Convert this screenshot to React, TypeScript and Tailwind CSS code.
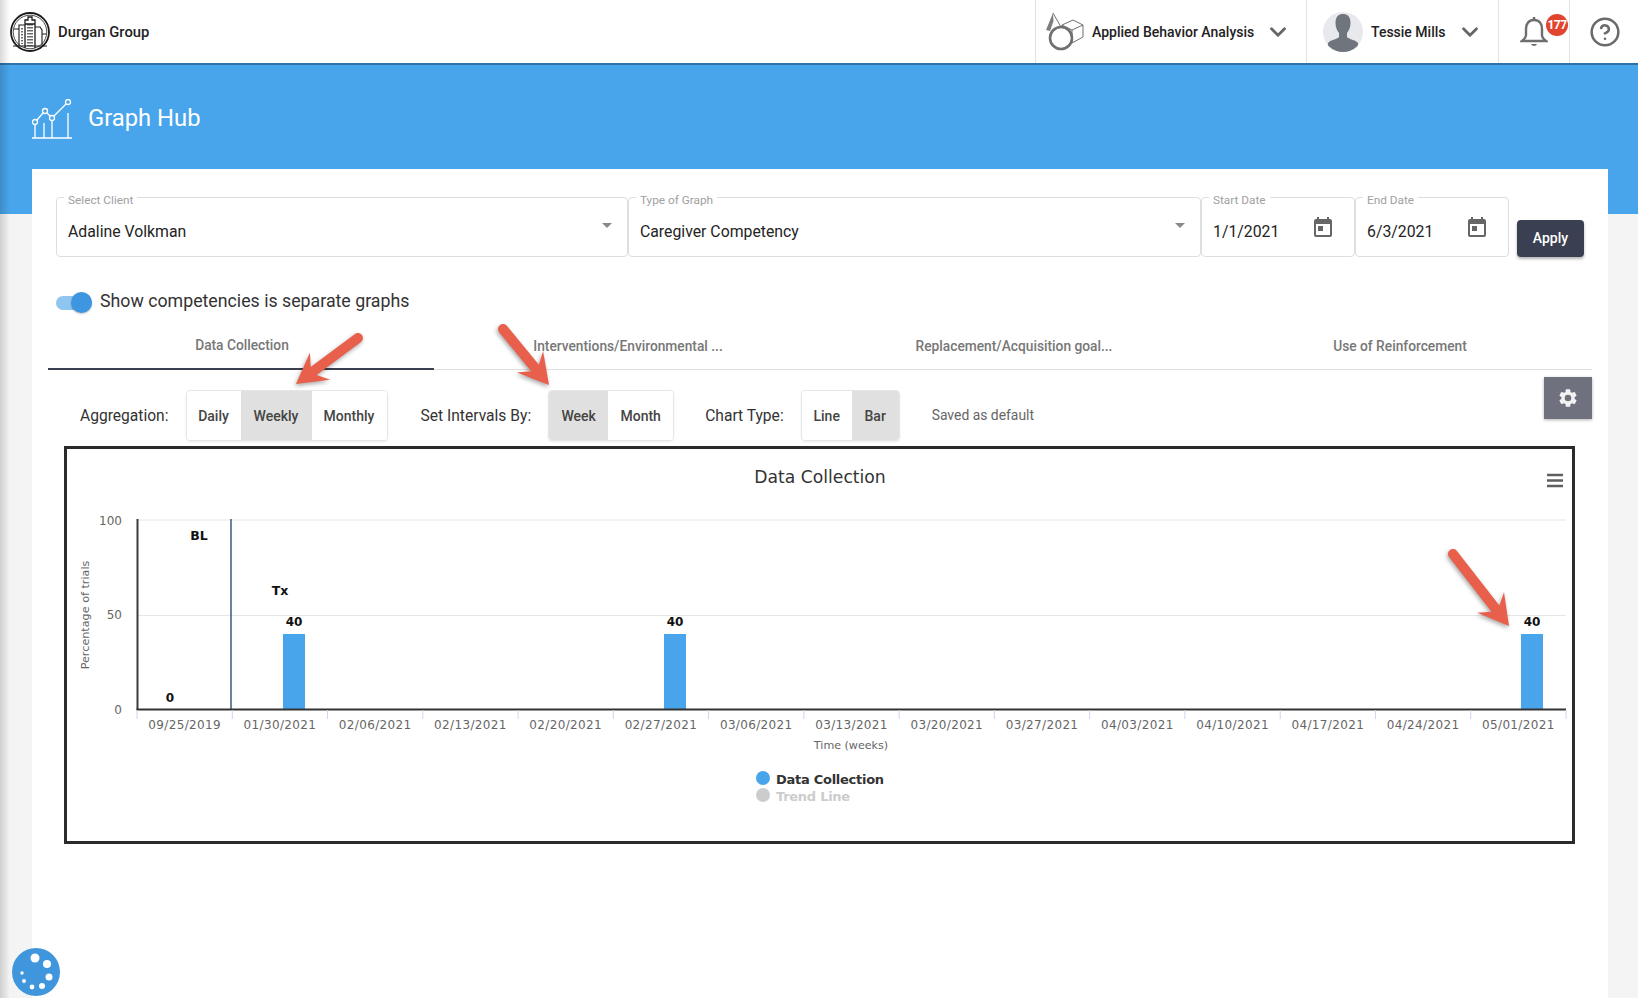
import React from "react";
import { ChevronDown, CircleHelp } from "lucide-react";

const dates = ["09/25/2019","01/30/2021","02/06/2021","02/13/2021","02/20/2021","02/27/2021","03/06/2021","03/13/2021","03/20/2021","03/27/2021","04/03/2021","04/10/2021","04/17/2021","04/24/2021","05/01/2021"];

function Logo() {
  return (
    <svg width="40" height="40" viewBox="0 0 40 40" fill="none" stroke="#1c1c1c" className="shrink-0">
      <circle cx="20" cy="20" r="19" strokeWidth="1.800" />
      <circle cx="20" cy="20" r="16.800" strokeWidth="0.8" />
      <path d="M15 36V8h3V5h4v3h3v28M15 12h10" strokeWidth="1.300" />
      <path d="M15 13H9v21M25 15h5l2 3v15M9 17H4M32 22h4" strokeWidth="1.100" />
      <path d="M18 12v22M20 12v22M22 12v22M12 16v16" strokeWidth="1.300" strokeDasharray="1.500 1.500" />
      <path d="M3 34h34" strokeWidth="1.200" />
    </svg>
  );
}

function ShapesIcon() {
  return (
    <svg width="40" height="40" viewBox="0 0 40 40" fill="none" stroke="#6f6f6f" className="shrink-0">
      <path d="M18 13l11-5 10 5v12l-11 6-10-6zM18 13l10 5 11-5M28 18v13" strokeWidth="1" fill="#fff" />
      <path d="M9 1 2 18l4 1 3.500-10z" fill="#7d7d7d" stroke="none" />
      <path d="M9 1l8 14" strokeWidth="1" />
      <circle cx="17" cy="26" r="11" strokeWidth="2.600" fill="#fff" />
    </svg>
  );
}

function Avatar() {
  return (
    <svg width="40" height="40" viewBox="0 0 40 40" className="shrink-0">
      <clipPath id="av"><circle cx="20" cy="20" r="20" /></clipPath>
      <circle cx="20" cy="20" r="20" fill="#e8e9ec" />
      <g clipPath="url(#av)" fill="#70757d">
        <path d="M12.500 11C12.500 4 16 2 20 2s7.500 2 7.500 9c0 5-2 8-3.500 10v4c1 2 9 3 11 6l1 9H4l1-9c2-3 10-4 11-6v-4c-1.500-2-3.500-5-3.500-10z" />
      </g>
    </svg>
  );
}

function CalendarIcon() {
  return (
    <svg width="24" height="24" viewBox="0 0 24 24" fill="#666" className="shrink-0">
      <path d="M19 3h-1V1h-2v2H8V1H6v2H5c-1.110 0-1.990.9-1.990 2L3 19c0 1.100.89 2 2 2h14c1.100 0 2-.9 2-2V5c0-1.100-.9-2-2-2zm0 16H5V8h14v11zM7 10h5v5H7z" />
    </svg>
  );
}

function Outlined({ label, value, className, kind }: { label: string; value: string; className: string; kind: "select" | "date" }) {
  return (
    <div className={`relative h-[60px] rounded-[4px] border border-[#dedede] flex items-center pl-[11px] ${className}`}>
      <span className="absolute left-[7px] top-[-5px] bg-white px-[4px] text-[11.8px] leading-[14px] text-[#a0a0a0]">{label}</span>
      <span className="text-[15.8px] leading-[20px] text-[#232323] mt-[10px]">{value}</span>
      {kind === "select" ? (
        <span className="ml-auto mr-[15px] mt-[-3px] w-0 h-0 border-l-[5px] border-r-[5px] border-t-[5px] border-l-transparent border-r-transparent border-t-[#8a8a8a]" />
      ) : (
        <span className="ml-auto mr-[19px] mt-[2px]"><CalendarIcon /></span>
      )}
    </div>
  );
}

function Group({ items, active, widths }: { items: string[]; active: string; widths: string[] }) {
  return (
    <div className="flex h-[51px] rounded-[4px] border border-[#e6e6e6] shadow-[0_1px_2px_rgba(0,0,0,0.08)] overflow-hidden">
      {items.map((t, i) => (
        <div key={t} className={`flex items-center justify-center pt-[2px] text-[14px] font-medium text-[#444] ${widths[i]} ${t === active ? "bg-[#e0e0e0]" : "bg-white"}`}>{t}</div>
      ))}
    </div>
  );
}

function Arrow({ x1, y1, x2, y2 }: { x1: number; y1: number; x2: number; y2: number }) {
  const len = Math.hypot(x2 - x1, y2 - y1);
  const ang = (Math.atan2(y2 - y1, x2 - x1) * 180) / Math.PI;
  return (
    <g transform={`translate(${x1} ${y1}) rotate(${ang})`} fill="#e8604c">
      <path d={`M0 -5 L${len - 22} -5 L${len - 30} -17 L${len} 0 L${len - 30} 17 L${len - 22} 5 L0 5 A5 5 0 0 1 0 -5Z`} />
    </g>
  );
}

function Chart() {
  const step = (1566 - 137) / 15;
  return (
    <svg width="1505" height="392" viewBox="67 450 1505 392" className="block">
      <g fontFamily="'DejaVu Sans', sans-serif">
        <text x="820" y="484" textAnchor="middle" fontSize="17.2" fill="#333">Data Collection</text>
        <path d="M1547 476h16M1547 481.500h16M1547 487h16" stroke="#5f5f5f" strokeWidth="2.600" />
        <path d="M137 521H1566M137 616.500H1566" stroke="#e6e6e6" />
        {["100", "50", "0"].map((t, i) => (
          <text key={t} x="122" y={[526, 620, 715][i]} textAnchor="end" fontSize="12" fill="#666">{t}</text>
        ))}
        <text transform="translate(89 616) rotate(-90)" textAnchor="middle" fontSize="11.2" fill="#666">Percentage of trials</text>
        {[283, 664, 1521].map((x) => <rect key={x} x={x} y="635" width="22" height="75" fill="#48a5ec" />)}
        <path d="M231 520V710" stroke="#2c4f70" strokeWidth="1.400" />
        <path d="M137.500 520V711" stroke="#3a3a3a" strokeWidth="2" />
        <path d="M136.500 710.500H1566" stroke="#333" strokeWidth="2" />
        {Array.from({ length: 16 }, (_, i) => (
          <path key={i} d={`M${137 + i * step} 711V720`} stroke="#ccd6eb" />
        ))}
        {dates.map((d, i) => (
          <text key={d} x={137 + step * (i + 0.5)} y="730" textAnchor="middle" fontSize="12" letterSpacing="0.35" fill="#666">{d}</text>
        ))}
        <text x="851" y="750" textAnchor="middle" fontSize="11.1" fill="#666">Time (weeks)</text>
        <g fontWeight="700" fill="#111">
          <text x="199" y="541" textAnchor="middle" fontSize="12.500">BL</text>
          <text x="280" y="596" textAnchor="middle" fontSize="12.500">Tx</text>
          <text x="170" y="703" textAnchor="middle" fontSize="12">0</text>
          {[294, 675, 1532].map((x) => <text key={x} x={x} y="627" textAnchor="middle" fontSize="12">40</text>)}
        </g>
        <circle cx="763" cy="779" r="7" fill="#48a5ec" />
        <circle cx="763" cy="796" r="7" fill="#cccccc" />
        <text x="776" y="784.500" fontSize="13" letterSpacing="-0.27" fontWeight="700" fill="#333">Data Collection</text>
        <text x="776" y="801.500" fontSize="13" letterSpacing="-0.27" fontWeight="700" fill="#cccccc">Trend Line</text>
      </g>
    </svg>
  );
}

export default function App() {
  return (
    <div className="relative h-screen overflow-hidden bg-[#f4f4f4] font-['Roboto',sans-serif]">
      <header className="flex h-[65px] items-center bg-white border-b-2 border-[#2f72a8]">
        <div className="flex items-center pl-[10px] gap-[8px]">
          <Logo />
          <span className="text-[14.8px] font-medium text-[#222] mt-[2px]">Durgan Group</span>
        </div>
        <div className="ml-auto flex h-full">
          <div className="flex items-center w-[271px] border-l border-[#e2e2e2] pl-[8px]">
            <ShapesIcon />
            <span className="ml-[8px] text-[14px] font-medium text-[#222] mt-[2px]">Applied Behavior Analysis</span>
            <ChevronDown className="ml-[11px] text-[#666]" size={26} strokeWidth={2.6} />
          </div>
          <div className="flex items-center w-[192px] border-l border-[#e2e2e2] pl-[16px]">
            <Avatar />
            <span className="ml-[8px] text-[14px] font-medium text-[#222] mt-[2px]">Tessie Mills</span>
            <ChevronDown className="ml-[11px] text-[#666]" size={26} strokeWidth={2.6} />
          </div>
          <div className="relative flex items-center w-[71px] border-l border-[#e2e2e2] pl-[21px]">
            <svg width="28" height="32" viewBox="0 0 28 32" fill="none" stroke="#6e6e6e" strokeWidth="2.400">
              <path d="M14 4c-5.500 0-8 4-8 9v6c0 2-1.500 4-4 6h24c-2.500-2-4-4-4-6v-6c0-5-2.500-9-8-9z" />
              <path d="M14 1v3" strokeWidth="2.600" />
              <path d="M11 28c1 2.500 5 2.500 6 0z" fill="#6e6e6e" stroke="none" />
            </svg>
            <span className="absolute left-[47px] top-[14px] flex h-[22px] w-[22px] items-center justify-center rounded-full bg-[#e2452f] text-[12px] font-bold tracking-[-0.5px] text-white">177</span>
          </div>
          <div className="flex items-center w-[69px] border-l border-[#e2e2e2] pl-[19px]">
            <CircleHelp size={32} strokeWidth={1.9} className="text-[#6a6a6a]" />
          </div>
        </div>
      </header>

      <div className="h-[149px] bg-[#48a5ec] pl-[32px] pt-[34px]">
        <div className="flex items-center gap-[16px]">
          <svg width="40" height="40" viewBox="0 0 40 40" fill="none" stroke="#fff" strokeWidth="1.300">
            <path d="M0 39h40M3 39V26M12 39V24M20 39V22M36 39V14" />
            <path d="M5 21 11 14M15 14l3 3M22 17 34 5" />
            <circle cx="3" cy="23" r="2.500" />
            <circle cx="13" cy="12" r="2.500" />
            <circle cx="20" cy="19" r="2.500" />
            <circle cx="36" cy="3" r="2.500" />
          </svg>
          <span className="text-[23.8px] text-white">Graph Hub</span>
        </div>
      </div>

      <main className="relative mt-[-45px] ml-[32px] w-[1576px] h-[840px] bg-white">
        <div className="flex pl-[24px] pt-[28px]">
          <Outlined label="Select Client" value="Adaline Volkman" className="w-[572px]" kind="select" />
          <Outlined label="Type of Graph" value="Caregiver Competency" className="w-[573px]" kind="select" />
          <Outlined label="Start Date" value="1/1/2021" className="w-[154px]" kind="date" />
          <Outlined label="End Date" value="6/3/2021" className="w-[154px]" kind="date" />
          <button className="ml-[8px] mt-[23px] h-[37px] w-[67px] rounded-[4px] bg-[#3a3f51] text-[14px] font-medium text-white shadow-[0_2px_3px_rgba(0,0,0,0.3)]">Apply</button>
        </div>

        <div className="mt-[35px] ml-[24px] flex items-center h-[21px]">
          <div className="relative h-[14px] w-[36px] rounded-full bg-[#8fc6f0]">
            <span className="absolute right-0 top-[-4px] h-[21px] w-[21px] rounded-full bg-[#3f96e0] shadow-[0_1px_2px_rgba(0,0,0,0.25)]" />
          </div>
          <span className="ml-[8px] text-[17.75px] leading-[21px] mt-[-2px] text-[#333]">Show competencies is separate graphs</span>
        </div>

        <div className="mt-[21px] ml-[16px] w-[1544px] grid grid-cols-4 h-[36px] border-b border-[#e0e0e0] text-[13.75px] font-medium text-[#777]">
          <div className="flex items-center justify-center h-[36px] pb-[12px] pl-[2px] border-b-2 border-[#3a3f51]">Data Collection</div>
          <div className="flex items-center justify-center pb-[12px] pl-[2px]">Interventions/Environmental ...</div>
          <div className="flex items-center justify-center pb-[12px] pl-[2px]">Replacement/Acquisition goal...</div>
          <div className="flex items-center justify-center pb-[12px] pl-[2px]">Use of Reinforcement</div>
        </div>

        <div className="mt-[7px] ml-[16px] w-[1544px] flex items-start justify-between h-[63px]">
          <div className="mt-[13px] ml-[32px] flex items-center text-[15.6px] text-[#333]">
            <span className="mt-[2px]">Aggregation:</span>
            <div className="ml-[17px]"><Group items={["Daily", "Weekly", "Monthly"]} active="Weekly" widths={["w-[54px]", "w-[71px]", "w-[75px]"]} /></div>
            <span className="ml-[33px] mt-[2px]">Set Intervals By:</span>
            <div className="ml-[17px]"><Group items={["Week", "Month"]} active="Week" widths={["w-[59px]", "w-[65px]"]} /></div>
            <span className="ml-[31px] mt-[2px]">Chart Type:</span>
            <div className="ml-[17px]"><Group items={["Line", "Bar"]} active="Bar" widths={["w-[50px]", "w-[47px]"]} /></div>
            <span className="ml-[32px] mt-[-1px] text-[13.9px] text-[#666]">Saved as default</span>
          </div>
          <button className="flex h-[42px] w-[48px] items-center justify-center bg-[#6f717f] shadow-[0_1px_3px_rgba(0,0,0,0.3)]">
            <svg width="22" height="22" viewBox="0 0 24 24" fill="#f2f2f2"><path d="M19.140 12.940c.04-.3.06-.61.06-.94 0-.32-.02-.64-.07-.94l2.030-1.580a.49.49 0 0 0 .12-.61l-1.920-3.320a.49.49 0 0 0-.59-.22l-2.390.96c-.5-.38-1.030-.7-1.620-.94l-.36-2.540a.48.48 0 0 0-.48-.41h-3.840c-.24 0-.43.17-.47.41l-.36 2.540c-.59.24-1.130.57-1.620.94l-2.390-.96a.49.49 0 0 0-.59.22L2.740 8.870c-.12.21-.08.47.12.61l2.030 1.580c-.05.3-.09.63-.09.94s.02.64.07.94l-2.030 1.580a.49.49 0 0 0-.12.61l1.920 3.320c.12.22.37.29.59.22l2.390-.96c.5.38 1.030.7 1.620.94l.36 2.540c.05.24.24.41.48.41h3.840c.24 0 .44-.17.47-.41l.36-2.540c.59-.24 1.130-.56 1.620-.94l2.390.96c.22.08.47 0 .59-.22l1.920-3.320c.12-.22.07-.47-.12-.61l-2.010-1.580zM12 15.600A3.600 3.600 0 1 1 12 8.400a3.600 3.600 0 0 1 0 7.200z" /></svg>
          </button>
        </div>

        <div className="mt-[6px] ml-[32px] w-[1511px] h-[398px] border-[3px] border-[#2b2b2b]">
          <Chart />
        </div>
      </main>

      <div className="absolute left-0 top-0 bottom-0 w-[10px] bg-gradient-to-r from-black/15 to-transparent" />

      <svg className="absolute left-0 top-0 pointer-events-none" width="1638" height="998" style={{ filter: "drop-shadow(-1px 2px 2px rgba(0,0,0,0.35))" }}>
        <Arrow x1={358} y1={338} x2={296} y2={384} />
        <Arrow x1={503} y1={329} x2={549} y2={385} />
        <Arrow x1={1453} y1={554} x2={1509} y2={626} />
      </svg>

      <svg className="absolute left-[12px] top-[948px]" width="48" height="48" viewBox="12 948 48 48">
        <circle cx="36" cy="972" r="24" fill="#3f96dc" />
        <g fill="#fff">
          <circle cx="35" cy="958" r="4.500" />
          <circle cx="47" cy="964" r="4" />
          <circle cx="49" cy="977" r="3.500" />
          <circle cx="42" cy="986" r="3" />
          <circle cx="32" cy="987" r="2.400" />
          <circle cx="24" cy="981" r="2" />
          <circle cx="22" cy="973" r="1.700" />
        </g>
      </svg>
    </div>
  );
}
